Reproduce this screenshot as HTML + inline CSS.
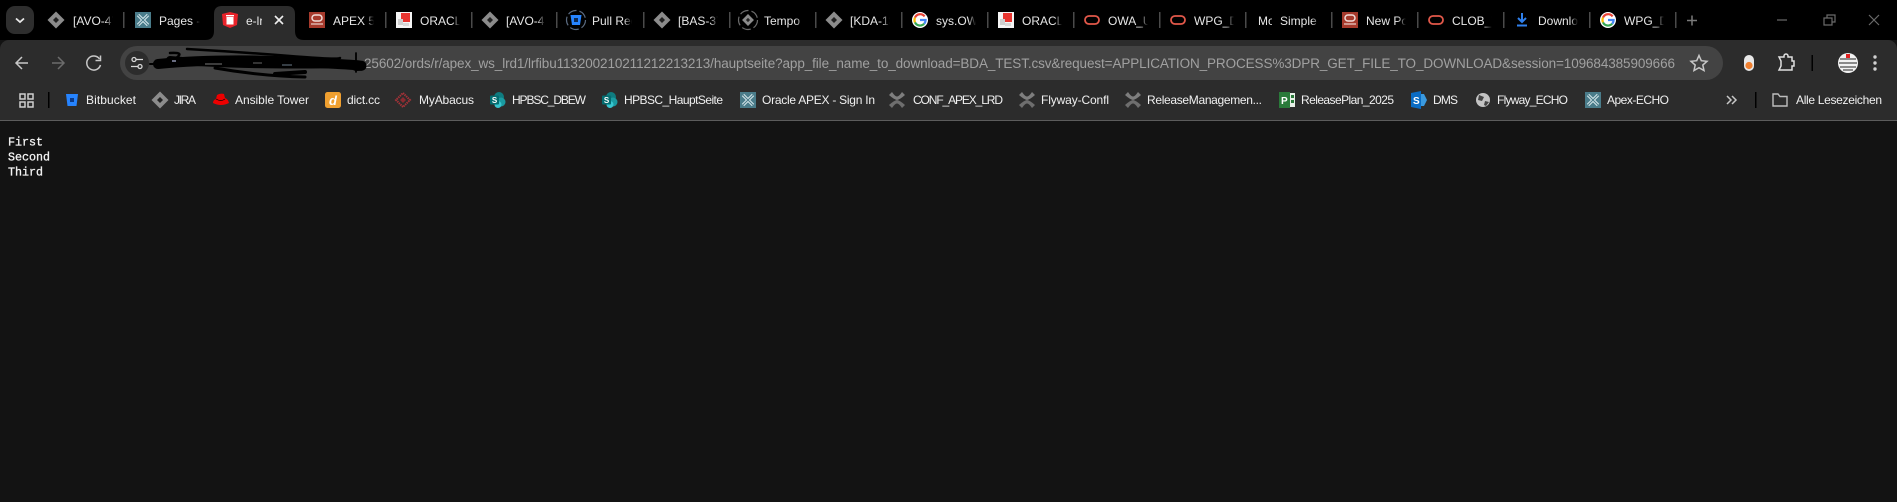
<!DOCTYPE html>
<html><head><meta charset="utf-8"><title>e-lr</title>
<style>
html,body{margin:0;padding:0;background:#131313;width:1897px;height:502px;overflow:hidden}
svg{display:block;position:absolute;left:0;top:0}
text{font-family:"Liberation Sans",sans-serif;font-size:12px;fill:#e3e3e3}
.t{font-size:12px;fill:#e6e6e6}
.b{font-size:12px;fill:#f0f0f0}
.u{font-size:13.5px;fill:#a0a0a0}
.m{font-family:"Liberation Mono",monospace;font-size:11.7px;fill:#f4f4f4;stroke:#f4f4f4;stroke-width:.3}
</style></head><body>
<svg width="1897" height="502" viewBox="0 0 1897 502" xmlns="http://www.w3.org/2000/svg">
<defs>
<linearGradient id="f"><stop offset="0" stop-color="#000" stop-opacity="0"/><stop offset="1" stop-color="#000"/></linearGradient>
<g id="jira"><path d="M0-8.5 8.5 0 0 8.5-8.5 0Z" fill="#8c8c8c"/><path d="M0-3 3 0 0 3-3 0Z" fill="#222"/></g>
<g id="apx"><rect x="-8" y="-8" width="16" height="16" fill="#4a7c8a"/><path d="M-5-5 5 5M5-5-5 5" stroke="#d5e6ea" stroke-width="3.2" fill="none"/><path d="M-5-5 5 5M5-5-5 5" stroke="#4a7c8a" stroke-width="1.1" fill="none"/></g>
<g id="ared"><rect x="-8" y="-8" width="16" height="16" fill="#a63a2c"/><rect x="-5" y="-5" width="10" height="6" rx="3" fill="none" stroke="#f1dcd8" stroke-width="1.5"/><path d="M-6 4H6" stroke="#e8c8c2" stroke-width="1.3"/></g>
<g id="oval"><rect x="-7" y="-4" width="14" height="8" rx="4" fill="none" stroke="#e2584a" stroke-width="1.8"/></g>
<g id="opg"><rect x="-8" y="-8" width="16" height="16" fill="#f5f5f5"/><rect x="-3" y="-7" width="9" height="9" fill="#e8342f"/><rect x="-6" y="-1" width="5" height="6" fill="#cfcfcf"/><rect x="-1" y="3" width="6" height="3" fill="#d8d8d8"/></g>
<g id="goo"><circle r="8" fill="#fff"/><path d="M4.6-3.6A5.6 5.6 0 0 0-5-2.4" stroke="#ea4335" stroke-width="2.2" fill="none"/><path d="M-5-2.4A5.6 5.6 0 0 0-5 2.4" stroke="#fbbc05" stroke-width="2.2" fill="none"/><path d="M-5 2.4A5.6 5.6 0 0 0 4.2 3.7" stroke="#34a853" stroke-width="2.2" fill="none"/><path d="M4.2 3.7A5.6 5.6 0 0 0 5.6 0H0" stroke="#4285f4" stroke-width="2.2" fill="none"/></g>
<g id="conf"><path d="M-8-5-5-8Q-2-3.5 0-3.5 2-3.5 5-8L8-5Q3-.5 0 0-3-.5-8-5Z" fill="#7e7e7e"/><path d="M-8 5-5 8Q-2 3.5 0 3.5 2 3.5 5 8L8 5Q3 .5 0 0-3 .5-8 5Z" fill="#6e6e6e"/></g>
<g id="sp"><circle cx="1" cy="-3" r="5" fill="#0f7c80"/><circle cx="3" cy="2" r="4.5" fill="#1a9ba1"/><circle cx="0" cy="4.5" r="3.5" fill="#37c6d0"/><rect x="-8" y="-4.5" width="9" height="9" rx="1" fill="#036c70"/><text x="-6.2" y="2.8" style="font-size:8px;font-weight:bold;fill:#fff">S</text></g>
</defs>

<!-- frame -->
<rect width="1897" height="40" fill="#000"/>
<rect x="0" y="40" width="1897" height="81" rx="9" fill="#2c2c2c"/>
<rect x="0" y="50" width="1897" height="70" fill="#2c2c2c"/>
<rect x="0" y="120" width="1897" height="1" fill="#5c5c5c"/>
<rect x="0" y="121" width="1897" height="381" fill="#131313"/>

<!-- expand -->
<rect x="6" y="6" width="28" height="28" rx="9" fill="#2e2e2e"/>
<path d="M16 18.5 20 22 24 18.5" fill="none" stroke="#e8e8e8" stroke-width="1.8"/>

<!-- separators -->
<g fill="#4a4a4a">
<rect x="123" y="12" width="1.5" height="16"/><rect x="385" y="12" width="1.5" height="16"/><rect x="471" y="12" width="1.5" height="16"/><rect x="556" y="12" width="1.5" height="16"/><rect x="643" y="12" width="1.5" height="16"/><rect x="729" y="12" width="1.5" height="16"/><rect x="815" y="12" width="1.5" height="16"/><rect x="901" y="12" width="1.5" height="16"/><rect x="987" y="12" width="1.5" height="16"/><rect x="1073" y="12" width="1.5" height="16"/><rect x="1159" y="12" width="1.5" height="16"/><rect x="1245" y="12" width="1.5" height="16"/><rect x="1331" y="12" width="1.5" height="16"/><rect x="1417" y="12" width="1.5" height="16"/><rect x="1503" y="12" width="1.5" height="16"/><rect x="1589" y="12" width="1.5" height="16"/><rect x="1675" y="12" width="1.5" height="16"/>
</g>

<!-- tab titles -->
<text class="t" x="73" y="25">[AVO-47</text>
<text class="t" x="159" y="25">Pages -</text>
<text class="t" x="333" y="25">APEX 5,</text>
<text class="t" x="420" y="25">ORACLE</text>
<text class="t" x="506" y="25">[AVO-47</text>
<text class="t" x="592" y="25">Pull Req</text>
<text class="t" x="678" y="25">[BAS-37</text>
<text class="t" x="764" y="25">Tempo</text>
<text class="t" x="850" y="25">[KDA-13</text>
<text class="t" x="936" y="25">sys.OWA</text>
<text class="t" x="1022" y="25">ORACLE</text>
<text class="t" x="1108" y="25">OWA_U</text>
<text class="t" x="1194" y="25">WPG_D</text>
<text class="t" x="1280" y="25">Simple</text>
<text class="t" x="1366" y="25">New Po</text>
<text class="t" x="1452" y="25">CLOB_T</text>
<text class="t" x="1538" y="25">Downlo</text>
<text class="t" x="1624" y="25">WPG_D</text>
<!-- tab fades -->
<g fill="url(#f)">
<rect x="105" y="8" width="8" height="26"/><rect x="192" y="8" width="8" height="26"/><rect x="366" y="8" width="8" height="26"/><rect x="452" y="8" width="8" height="26"/><rect x="537" y="8" width="8" height="26"/><rect x="624" y="8" width="8" height="26"/><rect x="710" y="8" width="8" height="26"/><rect x="796" y="8" width="8" height="26"/><rect x="882" y="8" width="8" height="26"/><rect x="968" y="8" width="8" height="26"/><rect x="1054" y="8" width="8" height="26"/><rect x="1140" y="8" width="8" height="26"/><rect x="1226" y="8" width="8" height="26"/><rect x="1312" y="8" width="8" height="26"/><rect x="1398" y="8" width="8" height="26"/><rect x="1484" y="8" width="8" height="26"/><rect x="1570" y="8" width="8" height="26"/><rect x="1656" y="8" width="8" height="26"/>
</g>
<g fill="#000">
<rect x="113" y="8" width="10" height="26"/><rect x="200" y="8" width="5" height="26"/><rect x="374" y="8" width="11" height="26"/><rect x="460" y="8" width="11" height="26"/><rect x="545" y="8" width="11" height="26"/><rect x="632" y="8" width="11" height="26"/><rect x="718" y="8" width="11" height="26"/><rect x="804" y="8" width="11" height="26"/><rect x="890" y="8" width="11" height="26"/><rect x="976" y="8" width="11" height="26"/><rect x="1062" y="8" width="11" height="26"/><rect x="1148" y="8" width="11" height="26"/><rect x="1234" y="8" width="11" height="26"/><rect x="1320" y="8" width="11" height="26"/><rect x="1406" y="8" width="11" height="26"/><rect x="1492" y="8" width="11" height="26"/><rect x="1578" y="8" width="11" height="26"/><rect x="1664" y="8" width="11" height="26"/>
</g>

<!-- active tab -->
<path d="M205 40Q214 40 214 31V14Q214 6 222 6H287Q295 6 295 14V31Q295 40 304 40Z" fill="#2c2c2c"/>
<text class="t" x="246" y="25" style="fill:#e8e8e8">e-lr</text>
<rect x="262" y="8" width="6" height="26" fill="#2c2c2c"/>
<path d="M275 16 283 24M283 16 275 24" stroke="#eee" stroke-width="1.6"/>
<!-- Mo -->
<text class="t" x="1258" y="25" style="fill:#e8e8e8">Mo</text>
<rect x="1272" y="8" width="7" height="26" fill="#000"/>

<!-- tab icons -->
<use href="#jira" x="56" y="20"/>
<use href="#apx" x="143" y="20"/>
<path d="M222 14 230 12 238 14 237 25 230 28 223 25Z" fill="#e8232a"/><rect x="226.5" y="17" width="7" height="7.5" fill="#fff"/><rect x="226" y="15" width="8" height="1.4" fill="#fff"/>
<use href="#ared" x="317" y="20"/>
<use href="#opg" x="404" y="20"/>
<use href="#jira" x="490" y="20"/>
<circle cx="576" cy="20" r="9.5" fill="none" stroke="#5a6a80" stroke-width="1.2" stroke-dasharray="9 3"/><path d="M570.5 15H581.5L580 25H572Z" fill="#2684ff"/><rect x="574" y="18" width="4" height="4" fill="#0b2a55"/>
<use href="#jira" x="662" y="20"/>
<circle cx="748" cy="20" r="9.5" fill="none" stroke="#6a6a6a" stroke-width="1.2" stroke-dasharray="9 3"/><g transform="translate(748 20) scale(.7)"><use href="#jira"/></g>
<use href="#jira" x="834" y="20"/>
<use href="#goo" x="920" y="20"/>
<use href="#opg" x="1006" y="20"/>
<use href="#oval" x="1092" y="20"/>
<use href="#oval" x="1178" y="20"/>
<use href="#ared" x="1350" y="20"/>
<use href="#oval" x="1436" y="20"/>
<path d="M1522 13V21M1518 18 1522 22 1526 18" stroke="#2f80ed" stroke-width="2" fill="none"/><rect x="1517" y="24.5" width="10" height="2" fill="#2f80ed"/>
<use href="#goo" x="1608" y="20"/>
<path d="M1692 15.5V25.5M1687 20.5H1697" stroke="#7a7a7a" stroke-width="1.5"/>

<!-- window controls -->
<path d="M1777 20H1787" stroke="#6a6a6a" stroke-width="1.2"/>
<path d="M1824 18H1832V25H1824ZM1827 18V15H1835V22H1832" fill="none" stroke="#6a6a6a" stroke-width="1.2"/>
<path d="M1869 15 1879 25M1879 15 1869 25" stroke="#6a6a6a" stroke-width="1.2"/>

<!-- nav -->
<path d="M28 63H17M22 57 16 63 22 69" fill="none" stroke="#c8c8c8" stroke-width="1.5"/>
<path d="M52 63H63M58 57 64 63 58 69" fill="none" stroke="#6c6c6c" stroke-width="1.5"/>
<path d="M99.5 59A7 7 0 1 0 100.5 65" fill="none" stroke="#c8c8c8" stroke-width="1.5"/><path d="M100.5 55.5V60.5H95.5" fill="none" stroke="#c8c8c8" stroke-width="1.5"/>

<!-- omnibox -->
<rect x="120" y="46" width="1603" height="34" rx="17" fill="#434343"/>
<circle cx="137" cy="63" r="12" fill="#2c2c2c"/>
<circle cx="134" cy="59.5" r="2" fill="none" stroke="#d8d8d8" stroke-width="1.3"/><path d="M136.5 59.5H143M131 66.5H137.5" stroke="#d8d8d8" stroke-width="1.3"/><circle cx="140" cy="66.5" r="2" fill="none" stroke="#d8d8d8" stroke-width="1.3"/>
<text class="u" x="364" y="68" textLength="1311" lengthAdjust="spacing">25602/ords/r/apex_ws_lrd1/lrfibu113200210211212213213/hauptseite?app_file_name_to_download=BDA_TEST.csv&amp;request=APPLICATION_PROCESS%3DPR_GET_FILE_TO_DOWNLOAD&amp;session=109684385909666</text>

<!-- scribble -->
<g fill="none" stroke="#000" stroke-linecap="round">
<path d="M158 64Q220 58 300 62T356 66" stroke-width="10"/>
<path d="M170 60Q240 66 350 64" stroke-width="8"/>
<path d="M187 49Q240 52 290 56T340 58" stroke-width="2.5"/>
<path d="M170 53Q185 52 176 58" stroke-width="2.5"/>
<path d="M215 68Q260 76 305 77" stroke-width="3"/>
<path d="M275 74 305 72" stroke-width="4"/>
<path d="M356 53V72" stroke-width="1.8"/>
<path d="M150 64H160" stroke-width="2"/>
</g>
<g fill="none" stroke-width="1">
<path d="M172 61H176" stroke="#d0d8ff"/><path d="M205 64H222" stroke="#777"/><path d="M253 63H262" stroke="#666"/><path d="M282 65H292" stroke="#6a7a88"/>
</g>

<!-- right toolbar -->
<path d="M1699 55.5 1701.3 60.7 1707 61.3 1702.8 65 1704 70.5 1699 67.7 1694 70.5 1695.2 65 1691 61.3 1696.7 60.7Z" fill="none" stroke="#c8c8c8" stroke-width="1.5"/>
<rect x="1744" y="55" width="10" height="16" rx="5" fill="#e8e8e8"/><circle cx="1749" cy="65.5" r="3.6" fill="#f08030"/>
<path d="M1779 57H1784V56A2 2 0 0 1 1788 56V57H1792V61H1794V66H1792V70H1779L1781 66V61Z" fill="none" stroke="#e0e0e0" stroke-width="1.5"/>
<rect x="1811.5" y="55" width="1.5" height="16" fill="#000"/>
<circle cx="1848" cy="63" r="10" fill="#f2f2f2"/><path d="M1840 59H1856M1839 63H1857M1840 67H1856M1843 70H1853" stroke="#222" stroke-width="1"/><rect x="1846" y="54" width="4" height="4" fill="#e02020"/>
<g fill="#d0d0d0"><circle cx="1875" cy="57" r="1.7"/><circle cx="1875" cy="63" r="1.7"/><circle cx="1875" cy="69" r="1.7"/></g>

<!-- bookmarks bar -->
<g fill="none" stroke="#cfcfcf" stroke-width="1.5"><rect x="20" y="94" width="5" height="5"/><rect x="28" y="94" width="5" height="5"/><rect x="20" y="102" width="5" height="5"/><rect x="28" y="102" width="5" height="5"/></g>
<rect x="48" y="92" width="1.5" height="16" fill="#000"/>
<path d="M66 94H78L76.5 106H67.5Z" fill="#2684ff"/><rect x="70" y="98" width="4" height="4" fill="#0a3a8a"/>
<use href="#jira" x="160" y="100"/>
<path d="M213 103Q221 107 229 103 228 99 225 98L224 94Q220 93 217 95L216 99Q213 100 213 103Z" fill="#e00"/><path d="M216 99Q221 102 225 99" stroke="#000" stroke-width=".7" fill="none"/>
<rect x="325" y="92" width="16" height="16" rx="2.5" fill="#f0a030"/><text x="329" y="105" style="font-size:13px;font-style:italic;font-weight:bold;fill:#fff">d</text>
<path d="M403 93 410 100 403 107 396 100Z" fill="none" stroke="#a83238" stroke-width="2" stroke-dasharray="1.4 .8"/><path d="M403 97 406 100 403 103 400 100Z" fill="#8a2a30"/>
<use href="#sp" x="498" y="100"/>
<use href="#sp" x="610" y="100"/>
<use href="#apx" x="748" y="100"/>
<use href="#conf" x="897" y="100"/>
<use href="#conf" x="1027" y="100"/>
<use href="#conf" x="1133" y="100"/>
<rect x="1285" y="93" width="10" height="14" fill="#e8f0e8"/><rect x="1279" y="92" width="11" height="16" fill="#2a7a3a"/><text x="1281" y="104" style="font-size:10px;font-weight:bold;fill:#fff">P</text><rect x="1291" y="95" width="3" height="3" fill="#2a7a3a"/><rect x="1291" y="100" width="3" height="3" fill="#2a7a3a"/>
<path d="M1411 93 1421 91V109L1411 107Z" fill="#0a6cc4"/><path d="M1421 94H1424L1427 100 1424 106H1421Z" fill="#3a9ae0"/><text x="1413" y="104" style="font-size:10px;font-weight:bold;fill:#fff">S</text>
<circle cx="1483" cy="100" r="7" fill="#c4c4c4"/><path d="M1479 95 1484 97 1482 101 1478 100ZM1485 101 1489 102 1486 106 1484 105Z" fill="#444"/>
<use href="#apx" x="1593" y="100"/>

<text class="b" x="86" y="104" textLength="50">Bitbucket</text>
<text class="b" x="174" y="104" textLength="22">JIRA</text>
<text class="b" x="235" y="104" textLength="74">Ansible Tower</text>
<text class="b" x="347" y="104" textLength="33">dict.cc</text>
<text class="b" x="419" y="104" textLength="55">MyAbacus</text>
<text class="b" x="512" y="104" textLength="74">HPBSC_DBEW</text>
<text class="b" x="624" y="104" textLength="99">HPBSC_HauptSeite</text>
<text class="b" x="762" y="104" textLength="113">Oracle APEX - Sign In</text>
<text class="b" x="913" y="104" textLength="90">CONF_APEX_LRD</text>
<text class="b" x="1041" y="104" textLength="68">Flyway-Confl</text>
<text class="b" x="1147" y="104" textLength="115">ReleaseManagemen...</text>
<text class="b" x="1301" y="104" textLength="93">ReleasePlan_2025</text>
<text class="b" x="1433" y="104" textLength="25">DMS</text>
<text class="b" x="1497" y="104" textLength="71">Flyway_ECHO</text>
<text class="b" x="1607" y="104" textLength="62">Apex-ECHO</text>
<path d="M1727 96 1731 100 1727 104M1732 96 1736 100 1732 104" fill="none" stroke="#c8c8c8" stroke-width="1.5"/>
<rect x="1755" y="92" width="1.5" height="16" fill="#000"/>
<path d="M1773 94H1778L1780 96.5H1787V106H1773Z" fill="none" stroke="#bdbdbd" stroke-width="1.4"/>
<text class="b" x="1796" y="104" textLength="86">Alle Lesezeichen</text>

<!-- page text -->
<text class="m" x="8" y="145.5" textLength="35">First</text>
<text class="m" x="8" y="160.5" textLength="42">Second</text>
<text class="m" x="8" y="175.5" textLength="35">Third</text>
</svg>
</body></html>
